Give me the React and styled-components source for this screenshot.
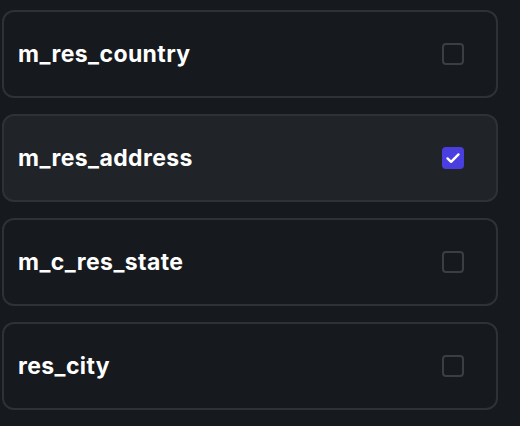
import React, { useState } from 'react'
import styled, { createGlobalStyle } from 'styled-components'

const GlobalStyle = createGlobalStyle`
    html, body {
        margin: 0;
        padding: 0;
        background: #16191d;
    }
    body {
        font-family: Inter, "Noto Sans", sans-serif;
    }
`

const List = styled.div`
    display: flex;
    flex-direction: column;
    gap: 16px;
    padding: 10px 22px 0 2px;
`

const Card = styled.label`
    display: flex;
    align-items: center;
    justify-content: space-between;
    height: 88px;
    box-sizing: border-box;
    padding: 0 32px 0 14px;
    border: 2px solid #2e3238;
    border-radius: 12px;
    background: ${p => (p.$active ? '#202428' : '#16191d')};
    cursor: pointer;
`

const Name = styled.span`
    color: #ffffff;
    font-size: 23px;
    font-weight: 700;
    letter-spacing: 0.4px;
`

const Box = styled.span`
    display: flex;
    align-items: center;
    justify-content: center;
    width: 22px;
    height: 22px;
    box-sizing: border-box;
    border-radius: 4px;
    border: ${p => (p.$checked ? 'none' : '2px solid #3a3e45')};
    background: ${p => (p.$checked ? '#4a3ee0' : 'transparent')};
`

const fields = ['m_res_country', 'm_res_address', 'm_c_res_state', 'res_city']

export default function App() {
    const [picked, setPicked] = useState('m_res_address')

    return (
        <>
            <GlobalStyle />
            <List>
                {fields.map(f => (
                    <Card key={f} $active={picked === f} onClick={() => setPicked(f)}>
                        <Name>{f}</Name>
                        <Box $checked={picked === f}>
                            {picked === f && (
                                <svg width="18" height="18" viewBox="0 0 18 18" fill="none">
                                    <path d="M3.5 9.4l3.6 3.4 7.4-7.4" stroke="#fff" strokeWidth="2.4" strokeLinecap="round" strokeLinejoin="round" />
                                </svg>
                            )}
                        </Box>
                    </Card>
                ))}
            </List>
        </>
    )
}
